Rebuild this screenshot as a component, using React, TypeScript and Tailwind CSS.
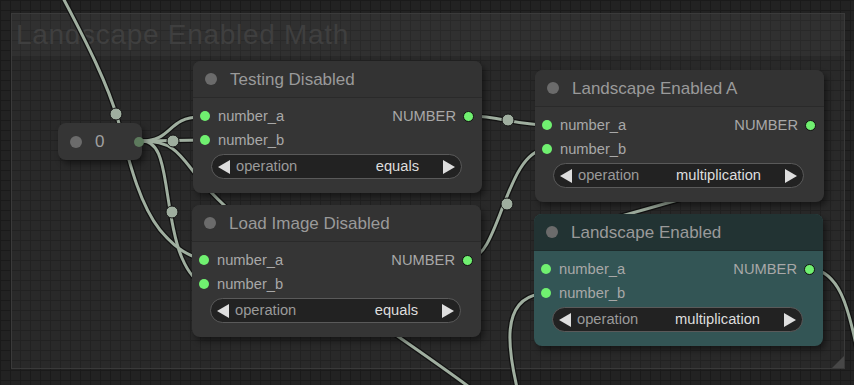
import React from "react";

type NodeProps = {
  pos: string;
  title: string;
  value: string;
  teal?: boolean;
};

const wires = [
  "M 62 -4 C 88 45, 108 85, 118 120 C 130 165, 140 205, 160 230 C 175 248, 190 258, 205 259",
  "M 142 141 C 158 141, 162 160, 166 185 C 170 210, 174 240, 182 258 C 188 272, 196 282, 205 284",
  "M 142 141 C 172 141, 168 117, 200 117 L 205 116",
  "M 142 141 L 205 140",
  "M 142 141 C 175 141, 180 155, 200 180 C 260 250, 380 320, 480 395",
  "M 469 116 C 500 116, 515 125, 547 125",
  "M 468 259 C 500 259, 505 150, 547 149",
  "M 590 225 L 720 188",
  "M 518 392 C 508 350, 500 300, 540 294",
  "M 810 268 C 838 272, 848 300, 860 365",
];

const dots = [
  [116, 114],
  [172, 212],
  [173, 141],
  [508, 120],
  [507, 204],
];

const Arrow = ({ dir }: { dir: "left" | "right" }) => (
  <svg width="12" height="14" viewBox="0 0 12 14" className="shrink-0">
    <polygon points={dir === "left" ? "12,0 12,14 0,7" : "0,0 0,14 12,7"} fill="#dedede" />
  </svg>
);

const GraphNode = ({ pos, title, value, teal }: NodeProps) => {
  return (
    <div
      className={`absolute ${pos} w-[289px] rounded-lg overflow-hidden shadow-[3px_4px_6px_rgba(0,0,0,0.45)] ${
        teal ? "bg-[#335555]" : "bg-[#353535]"
      }`}
    >
      <div
        className={`h-[37px] flex items-center pl-[12px] border-b ${
          teal ? "bg-[#223333] border-[#1d2b2b]" : "bg-[#333333] border-[#2a2a2a]"
        }`}
      >
        <span className="w-3 h-3 rounded-full bg-[#6b6b6b]" />
        <span className="ml-[13px] text-[17px] text-[#9a9a9a] leading-none">{title}</span>
      </div>
      <div className="pt-[6px] pb-[14px]">
        <div className="h-6 flex items-center pl-[7px] pr-[8px]">
          <span className="w-[10px] h-[10px] rounded-full bg-[#70f070]" />
          <span className="ml-[8px] text-[14.7px] text-[#a8a8a8]">number_a</span>
          <span className="ml-auto text-[14.7px] text-[#a8a8a8]">NUMBER</span>
          <span className="ml-[7px] w-[11px] h-[11px] rounded-full bg-[#70f070] border border-[#111]" />
        </div>
        <div className="h-6 flex items-center pl-[7px] pr-[8px]">
          <span className="w-[10px] h-[10px] rounded-full bg-[#70f070]" />
          <span className="ml-[8px] text-[14.7px] text-[#a8a8a8]">number_b</span>
        </div>
        <div className="mt-[2px] ml-[18px] mr-[20px] h-[25px] rounded-full border border-[#5a5a5a] bg-[#222222] flex items-center pl-[6px] pr-[6px]">
          <Arrow dir="left" />
          <span className="ml-[6px] text-[14.7px] text-[#9a9a9a]">operation</span>
          <span className="ml-auto mr-[24px] text-[14.7px] text-[#dddddd]">{value}</span>
          <Arrow dir="right" />
        </div>
      </div>
    </div>
  );
};

const App: React.FunctionComponent = () => {
  return (
    <div className="relative w-[854px] h-[385px] overflow-hidden bg-[#222222] bg-[linear-gradient(to_right,#1a1a1a_1px,transparent_1px),linear-gradient(to_bottom,#1a1a1a_1px,transparent_1px)] bg-[size:10px_10px] font-['Liberation_Sans',Arial,sans-serif]">
      {/* group */}
      <div className="absolute left-[11px] top-[13px] w-[834px] h-[356px] border border-[#3a3a3a] bg-[rgba(255,255,255,0.035)]">
        <div className="h-[42px] bg-[rgba(255,255,255,0.035)] flex items-center pl-[4px]">
          <span className="text-[28px] tracking-[0.7px] text-[#3f3f3f] leading-none">Landscape Enabled Math</span>
        </div>
        <svg className="absolute right-0 bottom-0" width="12" height="12" viewBox="0 0 12 12">
          <polygon points="12,0 12,12 0,12" fill="#474747" />
        </svg>
      </div>

      {/* links */}
      <svg className="absolute inset-0" width="854" height="385" viewBox="0 0 854 385">
        {wires.map((d, i) => (
          <path key={`o${i}`} d={d} fill="none" stroke="#121212" strokeWidth="5.5" />
        ))}
        {wires.map((d, i) => (
          <path key={`w${i}`} d={d} fill="none" stroke="#9fae9f" strokeWidth="3" />
        ))}
        {dots.map(([x, y], i) => (
          <circle key={i} cx={x} cy={y} r="6" fill="#9fae9f" stroke="#151515" strokeWidth="1" />
        ))}
      </svg>

      {/* primitive node */}
      <div className="absolute left-[58px] top-[123px] w-[84px] h-[37px] rounded-lg bg-[#353535] shadow-[3px_4px_6px_rgba(0,0,0,0.45)] flex items-center pl-[12px]">
        <span className="w-3 h-3 rounded-full bg-[#6b6b6b]" />
        <span className="ml-[13px] text-[17px] text-[#a0a0a0] leading-none">0</span>
        <span className="absolute right-[-2px] w-[10px] h-[10px] rounded-full bg-[#5d7a5d]" />
      </div>

      <GraphNode pos="left-[193px] top-[61px]" title="Testing Disabled" value="equals" />
      <GraphNode pos="left-[192px] top-[205px]" title="Load Image Disabled" value="equals" />
      <GraphNode pos="left-[535px] top-[70px]" title="Landscape Enabled A" value="multiplication" />
      <GraphNode pos="left-[534px] top-[214px]" title="Landscape Enabled" value="multiplication" teal />
    </div>
  );
};

export default App;
